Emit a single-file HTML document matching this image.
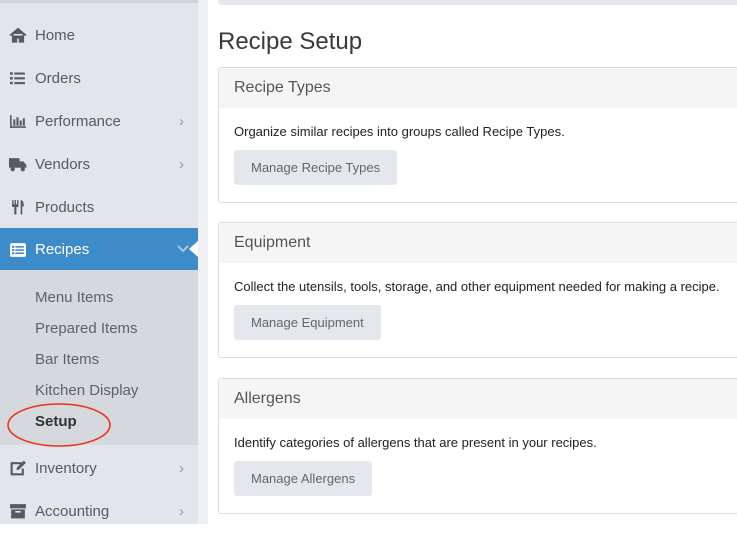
<!DOCTYPE html>
<html><head><style>
*{margin:0;padding:0;box-sizing:border-box}
body{width:737px;height:524px;overflow:hidden;background:#fff;font-family:"Liberation Sans",sans-serif;position:relative}
.side{position:absolute;left:0;top:0;width:198px;height:524px;background:#e2e5ec}
.side .topline{position:absolute;left:0;top:0;width:198px;height:3px;background:#cfd2d8}
.gap{position:absolute;left:198px;top:0;width:10px;height:524px;background:#eef0f4}
.item{position:absolute;left:0;width:198px;height:43px;font-size:15px;color:#555a63;line-height:45px}
.item .ic{position:absolute;left:9px;top:14px;width:18px;height:16px}
.item .t{position:absolute;left:35px}
.item .ch{position:absolute;left:179px;top:0;color:#999;font-size:15px}
.active{background:#3d8bc8;color:#fff}
.sub{position:absolute;left:0;top:270px;width:198px;height:175px;background:#d5d8dd}
.sub div{position:absolute;left:35px;font-size:15px;color:#5d626a}
.main h1{position:absolute;left:218px;top:28px;font-size:24px;font-weight:normal;color:#3a3a3a}
.topbar{position:absolute;left:218px;top:0;width:530px;height:5px;background:#e5e8ed;border-radius:0 0 3px 3px}
.card{position:absolute;left:218px;width:540px;height:136px;border:1px solid #ddd;border-radius:3px;background:#fff}
.card .hd{height:40px;background:#f5f5f5;font-size:16px;color:#555;padding:11px 15px;border-radius:3px 3px 0 0}
.card .bd{font-size:13px;color:#222;padding:16px 15px 0}
.card .btn{display:inline-block;margin-top:11px;background:#e4e7eb;color:#666;font-size:13px;padding:10px 17px;border-radius:3px}
</style></head><body>
<div class="side"><div class="topline"></div>
<div class="item" style="top:13px"><svg class="ic" viewBox="0 0 17 15"><path d="M1 8L8.5 1.5L16 8M3.5 6.5V14H7V10H10V14H13.5V6.5" fill="#555a63" stroke="#555a63" stroke-width="1.5"/></svg><span class="t">Home</span></div>
<div class="item" style="top:56px"><svg class="ic" viewBox="0 0 17 15"><g fill="#555a63"><rect x="1" y="2" width="2.5" height="2.5"/><rect x="1" y="6.5" width="2.5" height="2.5"/><rect x="1" y="11" width="2.5" height="2.5"/><rect x="5" y="2.3" width="10" height="2"/><rect x="5" y="6.8" width="10" height="2"/><rect x="5" y="11.3" width="10" height="2"/></g></svg><span class="t">Orders</span></div>
<div class="item" style="top:99px"><svg class="ic" viewBox="0 0 17 15"><g fill="#555a63"><rect x="1" y="2" width="1.5" height="12"/><rect x="1" y="12.5" width="15" height="1.5"/><rect x="4" y="6" width="2" height="6"/><rect x="7" y="4" width="2" height="8"/><rect x="10" y="7" width="2" height="5"/><rect x="13" y="5" width="2" height="7"/></g></svg><span class="t">Performance</span><span class="ch">›</span></div>
<div class="item" style="top:142px"><svg class="ic" viewBox="0 0 17 15"><g fill="#555a63"><rect x="0" y="2" width="10" height="9"/><path d="M10 5H13.5L16.5 8.5V11H10Z"/><circle cx="3.5" cy="12.5" r="2"/><circle cx="13" cy="12.5" r="2"/></g></svg><span class="t">Vendors</span><span class="ch">›</span></div>
<div class="item" style="top:185px"><svg class="ic" viewBox="0 0 17 15"><g fill="#555a63"><rect x="3" y="1" width="1.3" height="5"/><rect x="5.3" y="1" width="1.3" height="5"/><rect x="7.6" y="1" width="1.3" height="5"/><rect x="3" y="5" width="5.9" height="2.5"/><rect x="5" y="6" width="2" height="8.5"/><path d="M11 1C13.5 1 14 4 14 7H12.5V14.5H11Z"/></g></svg><span class="t">Products</span></div>
<div class="item active" style="top:228px;height:42px;line-height:44px;color:#fff"><svg class="ic" viewBox="0 0 17 15"><rect x="1" y="1" width="15" height="13" rx="1.5" fill="#fff"/><g fill="#3d8bc8"><rect x="3" y="3.5" width="2" height="2"/><rect x="3" y="6.5" width="2" height="2"/><rect x="3" y="9.5" width="2" height="2"/><rect x="6" y="3.8" width="8" height="1.5"/><rect x="6" y="6.8" width="8" height="1.5"/><rect x="6" y="9.8" width="8" height="1.5"/></g></svg><span class="t">Recipes</span><svg style="position:absolute;left:177px;top:17px" width="12" height="8" viewBox="0 0 12 8"><path d="M1 1L6 6L11 1" stroke="#a8c8e6" stroke-width="2" fill="none"/></svg><svg style="position:absolute;left:189px;top:13px" width="9" height="16" viewBox="0 0 9 16"><path d="M9 0L0 8L9 16Z" fill="#fff"/></svg></div>
<div class="sub">
<div style="top:19px">Menu Items</div><div style="top:50px">Prepared Items</div><div style="top:81px">Bar Items</div><div style="top:112px">Kitchen Display</div><div style="top:143px;font-weight:bold;color:#333">Setup</div>
<svg style="position:absolute;left:6px;top:132px" width="106" height="46"><ellipse cx="53" cy="23" rx="51" ry="21" fill="none" stroke="#e8321e" stroke-width="1.5"/></svg>
</div>
<div class="item" style="top:446px"><svg class="ic" viewBox="0 0 17 15"><path d="M12 3H2.5V13.5H13V8" stroke="#555a63" stroke-width="2" fill="none"/><path d="M7 9.5L7.5 7L14 0.5L16 2.5L9.5 9Z" fill="#555a63"/></svg><span class="t">Inventory</span><span class="ch">›</span></div>
<div class="item" style="top:489px"><svg class="ic" viewBox="0 0 17 15"><g fill="#555a63"><rect x="1" y="1" width="15" height="4"/><rect x="2" y="6" width="13" height="8.5"/></g><rect x="6" y="7.5" width="5" height="1.5" fill="#e2e5ec"/></svg><span class="t">Accounting</span><span class="ch">›</span></div>
</div>
<div class="gap"></div>
<div class="main">
<div class="topbar"></div>
<h1>Recipe Setup</h1>
<div class="card" style="top:67px"><div class="hd">Recipe Types</div><div class="bd">Organize similar recipes into groups called Recipe Types.<br><span class="btn">Manage Recipe Types</span></div></div>
<div class="card" style="top:222px"><div class="hd">Equipment</div><div class="bd">Collect the utensils, tools, storage, and other equipment needed for making a recipe.<br><span class="btn">Manage Equipment</span></div></div>
<div class="card" style="top:378px"><div class="hd">Allergens</div><div class="bd">Identify categories of allergens that are present in your recipes.<br><span class="btn">Manage Allergens</span></div></div>
</div>
</body></html>
